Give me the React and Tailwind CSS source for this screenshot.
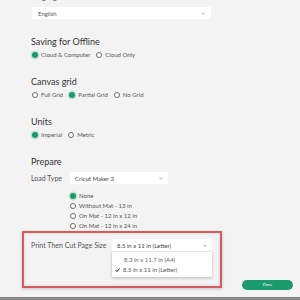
import React from "react";

function Radio({ label, checked }) {
  return (
    <div className="flex items-center gap-[3px]">
      {checked ? (
        <span className="w-[6px] h-[6px] rounded-full bg-[#1a9a6c] ring-[1.5px] ring-[#bfe6d6] shrink-0" />
      ) : (
        <span className="w-[6px] h-[6px] rounded-full border border-[#6b6b6b] bg-white shrink-0" />
      )}
      <span className="text-[6px] leading-[6px] text-[#555]">{label}</span>
    </div>
  );
}

function Chevron({ className }) {
  return (
    <svg viewBox="0 0 10 6" className={className} fill="none" stroke="#666" strokeWidth="1.3">
      <path d="M1 1l4 4 4-4" />
    </svg>
  );
}

function Heading({ children, className }) {
  return <h3 className={"text-[9px] leading-[11px] text-[#333] " + (className || "")}>{children}</h3>;
}

export default function App() {
  return (
    <div className="w-[300px] h-[300px] bg-[#f3f3f3] relative overflow-hidden flex flex-col" style={{ fontFamily: "Lato, 'Open Sans', sans-serif" }}>
      <div className="pl-[31px] flex flex-col">
        <div className="mt-[-6px] h-[4px] text-[7px] leading-[7px] text-[#444]">Language</div>
        <div className="mt-[9px] ml-[1px] w-[179px] h-[12px] bg-white flex items-center justify-between px-[6px]">
          <span className="text-[6px] text-[#555]">English</span>
          <Chevron className="w-[4px] h-[3px]" />
        </div>

        <Heading className="mt-[17px]">Saving for Offline</Heading>
        <div className="mt-[5px] ml-[1px] flex gap-[6px]">
          <Radio label="Cloud & Computer" checked />
          <Radio label="Cloud Only" />
        </div>

        <Heading className="mt-[18px]">Canvas grid</Heading>
        <div className="mt-[5px] ml-[1px] flex gap-[6px]">
          <Radio label="Full Grid" />
          <Radio label="Partial Grid" checked />
          <Radio label="No Grid" />
        </div>

        <Heading className="mt-[18px]">Units</Heading>
        <div className="mt-[5px] ml-[1px] flex gap-[6px]">
          <Radio label="Imperial" checked />
          <Radio label="Metric" />
        </div>

        <Heading className="mt-[18px]">Prepare</Heading>
        <div className="mt-[5px] flex items-center">
          <span className="w-[39px] text-[7px] text-[#555]">Load Type</span>
          <div className="w-[98px] h-[12px] bg-white flex items-center justify-between px-[5px]">
            <span className="text-[6px] text-[#444]">Cricut Maker 3</span>
            <Chevron className="w-[4px] h-[3px]" />
          </div>
        </div>
        <div className="mt-[9px] ml-[39px] flex flex-col gap-[4px]">
          <Radio label="None" checked />
          <Radio label="Without Mat - 13 in" />
          <Radio label="On Mat - 12 in x 12 in" />
          <Radio label="On Mat - 12 in x 24 in" />
        </div>
      </div>

      <div className="mt-[2px] ml-[22px] w-[200px] h-[57px] border-2 border-[#d45a5e] shadow-[inset_0_0_3px_rgba(0,0,0,0.15),0_1px_3px_rgba(0,0,0,0.2)] flex items-start pt-[6px] pl-[7px]">
        <span className="w-[81px] text-[7px] leading-[12px] text-[#555] whitespace-nowrap">Print Then Cut Page Size</span>
        <div className="flex flex-col w-[100px]">
          <div className="h-[13px] bg-white flex items-center justify-between px-[5px] border-b border-[#eee]">
            <span className="text-[6px] text-[#444]">8.5 in x 11 in (Letter)</span>
            <Chevron className="w-[4px] h-[3px]" />
          </div>
          <div className="bg-white shadow-[0_1px_3px_rgba(0,0,0,0.25)] flex flex-col pt-[5px] pb-[4px] gap-[4px]">
            <div className="pl-[12px] text-[6px] leading-[6px] text-[#666]">8.3 in x 11.7 in (A4)</div>
            <div className="flex items-center pl-[3px] gap-[3px] text-[6px] leading-[6px] text-[#555]">
              <svg viewBox="0 0 10 8" className="w-[5px] h-[4px]" fill="none" stroke="#222" strokeWidth="2">
                <path d="M1 4l3 3 5-6" />
              </svg>
              <span>8.5 in x 11 in (Letter)</span>
            </div>
          </div>
        </div>
      </div>

      <div className="absolute left-[242px] top-[280px] w-[51px] h-[10px] rounded-full bg-[#1b9a6d] flex items-center justify-center">
        <span className="text-[4px] text-white">Done</span>
      </div>
      <div className="absolute left-0 bottom-0 w-full h-[3px] bg-[#8a8a8a]" />
    </div>
  );
}
